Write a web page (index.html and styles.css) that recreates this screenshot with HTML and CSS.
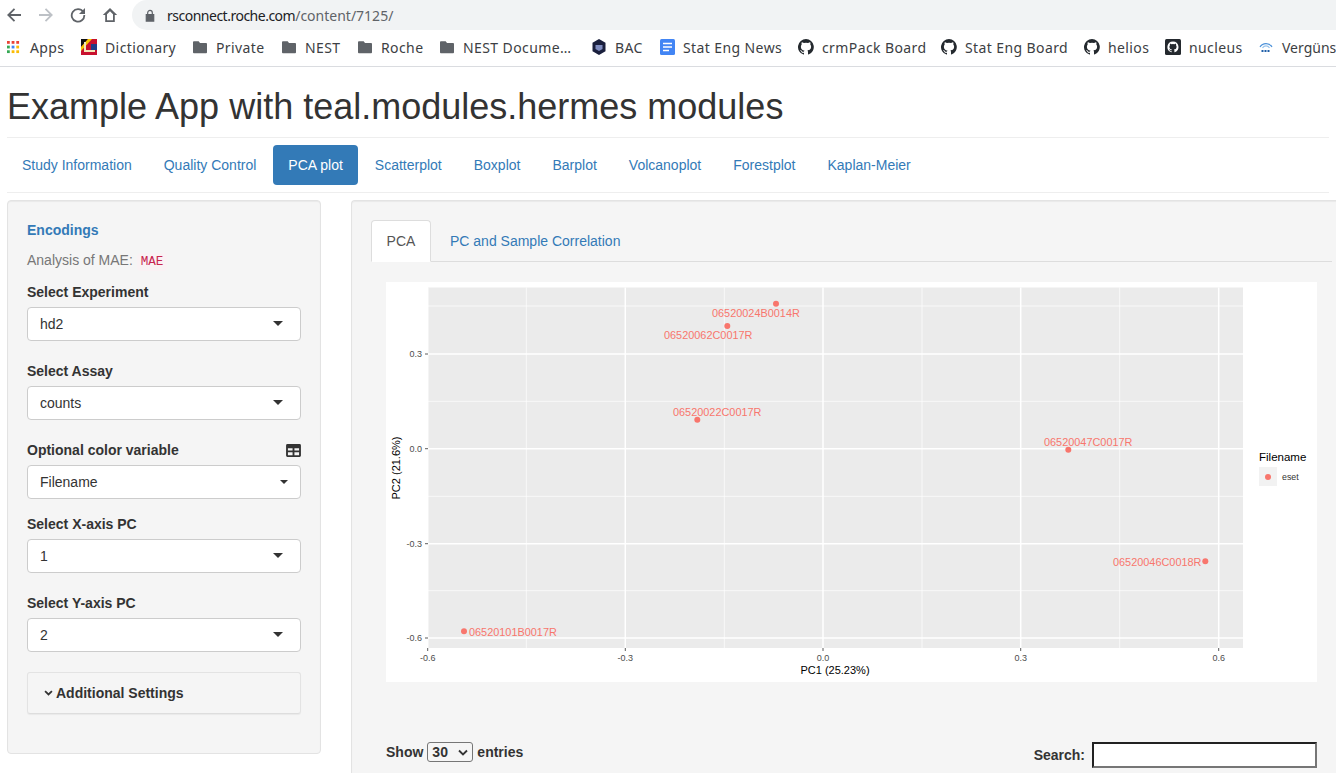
FILE: index.html
```html
<!DOCTYPE html>
<html lang="en">
<head>
<meta charset="utf-8">
<title>Example App</title>
<link rel="stylesheet" href="styles.css">
</head>
<body>
<svg class="defs" aria-hidden="true">
  <symbol id="folder" viewBox="0 0 16 16"><path d="M1 1.500h5.500L8 3.500h7a1 1 0 0 1 1 1V14a1 1 0 0 1-1 1H1a1 1 0 0 1-1-1V2.500a1 1 0 0 1 1-1z" fill="#5f6368"/></symbol>
  <symbol id="gh" viewBox="0 0 16 16"><path fill="#24292e" d="M8 0a8 8 0 0 0-2.500 15.600c.4.1.5-.2.5-.4v-1.400c-2.200.5-2.700-1-2.700-1-.4-.9-.9-1.200-.9-1.200-.7-.5.1-.5.1-.5.8.1 1.200.8 1.200.8.7 1.200 1.900.9 2.300.7.1-.5.3-.9.5-1.100-1.800-.2-3.600-.9-3.600-4 0-.9.3-1.600.8-2.100-.1-.2-.4-1 .1-2.100 0 0 .7-.2 2.200.8a7.500 7.500 0 0 1 4 0c1.500-1 2.200-.8 2.200-.8.4 1.100.2 1.900.1 2.100.5.6.8 1.300.8 2.100 0 3.100-1.900 3.700-3.700 3.900.3.3.6.8.6 1.500v2.200c0 .2.1.5.6.4A8 8 0 0 0 8 0z"/></symbol>
</svg>
<header class="chrome">
  <div class="toolbar">
    <div class="navbtns">
      <svg class="navicon" viewBox="0 0 16 16"><path d="M15 8H2.500M8.500 1.800 2.300 8l6.200 6.200" fill="none" stroke="#5f6368" stroke-width="1.800"/></svg>
      <svg class="navicon" viewBox="0 0 16 16"><path d="M1 8h12.500M7.500 1.800 13.700 8l-6.200 6.200" fill="none" stroke="#bdc1c6" stroke-width="1.800"/></svg>
      <svg class="navicon" viewBox="0 0 16 16"><path d="M13.200 4.800A6.300 6.300 0 1 0 14.300 8" fill="none" stroke="#5f6368" stroke-width="1.800"/><path d="M15 1v6H9z" fill="#5f6368"/></svg>
      <svg class="navicon" viewBox="0 0 16 16"><path d="M8 1 .8 8h2.400v7h9.600V8h2.400zM5 13.300V7.200l3-3 3 3v6.100z" fill="#5f6368"/></svg>
    </div>
    <div class="omnibox">
      <svg class="lock" viewBox="0 0 10 14"><path d="M2.500 6V4a2.500 2.500 0 0 1 5 0v2M1 6h8v7H1z" fill="none" stroke="#5f6368" stroke-width="1.300"/><path d="M1 6h8v7H1z" fill="#5f6368"/></svg>
      <span class="url">rsconnect.roche.com<span class="urlpath">/content/7125/</span></span>
    </div>
  </div>
  <nav class="bookmarks">
    <span class="bm bm-apps"><svg class="bmi" viewBox="0 0 14 14"><rect x="0" y="0" width="3" height="3" fill="#ea4335"/><rect x="5" y="0" width="3" height="3" fill="#ea4335"/><rect x="10" y="0" width="3" height="3" fill="#ea4335"/><rect x="0" y="5" width="3" height="3" fill="#34a853"/><rect x="5" y="5" width="3" height="3" fill="#4285f4"/><rect x="10" y="5" width="3" height="3" fill="#fbbc05"/><rect x="0" y="10" width="3" height="3" fill="#34a853"/><rect x="5" y="10" width="3" height="3" fill="#fbbc05"/><rect x="10" y="10" width="3" height="3" fill="#fbbc05"/></svg>Apps</span>
    <span class="bm bm-dict"><svg class="bmi bmi-l" viewBox="0 0 16 16"><rect width="16" height="16" fill="#c8102e"/><path d="M0 0h7L0 8z" fill="#111"/><path d="M0 8 7 0h4L0 12z" fill="#f6c700"/><path d="M10 5h6v6h-6z" fill="#1f3c88"/><path d="M3 3h2v8h9v2H3z" fill="#f3e6b8"/></svg>Dictionary</span>
    <span class="bm bm-priv"><svg class="bmi bmi-f" viewBox="0 0 16 16"><use href="#folder"/></svg>Private</span>
    <span class="bm bm-nest"><svg class="bmi bmi-f" viewBox="0 0 16 16"><use href="#folder"/></svg>NEST</span>
    <span class="bm bm-roche"><svg class="bmi bmi-f" viewBox="0 0 16 16"><use href="#folder"/></svg>Roche</span>
    <span class="bm bm-docs"><svg class="bmi bmi-f" viewBox="0 0 16 16"><use href="#folder"/></svg>NEST Docume…</span>
    <span class="bm bm-bac"><svg class="bmi bmi-l" viewBox="0 0 16 16"><path d="M8 0 14.500 3.800v8.400L8 16 1.500 12.200V3.800z" fill="#1a1f3d"/><path d="M4.500 6h7v4l-3.500 2-3.500-2z" fill="#7f8cc0"/></svg>BAC</span>
    <span class="bm bm-news"><svg class="bmi bmi-l" viewBox="0 0 16 16"><rect x="1" width="15" height="16" rx="1.500" fill="#4285f4"/><path d="M4 4.500h9M4 8h9M4 11.500h6" stroke="#fff" stroke-width="1.600"/></svg>Stat Eng News</span>
    <span class="bm bm-crm"><svg class="bmi bmi-l" viewBox="0 0 16 16"><use href="#gh"/></svg>crmPack Board</span>
    <span class="bm bm-seb"><svg class="bmi bmi-l" viewBox="0 0 16 16"><use href="#gh"/></svg>Stat Eng Board</span>
    <span class="bm bm-hel"><svg class="bmi bmi-l" viewBox="0 0 16 16"><use href="#gh"/></svg>helios</span>
    <span class="bm bm-nuc"><svg class="bmi bmi-l" viewBox="0 0 16 16"><rect width="16" height="16" rx="1.500" fill="#24292e"/><g transform="translate(2.400 2.400) scale(.7)"><path fill="#fff" d="M8 0a8 8 0 0 0-2.500 15.600c.4.1.5-.2.5-.4v-1.400c-2.200.5-2.700-1-2.700-1-.4-.9-.9-1.200-.9-1.200-.7-.5.1-.5.1-.5.8.1 1.200.8 1.200.8.7 1.200 1.900.9 2.300.7.1-.5.3-.9.5-1.100-1.800-.2-3.600-.9-3.600-4 0-.9.3-1.600.8-2.100-.1-.2-.4-1 .1-2.100 0 0 .7-.2 2.200.8a7.500 7.500 0 0 1 4 0c1.500-1 2.200-.8 2.200-.8.4 1.100.2 1.900.1 2.100.5.6.8 1.300.8 2.100 0 3.100-1.900 3.700-3.700 3.900.3.3.6.8.6 1.500v2.200c0 .2.1.5.6.4A8 8 0 0 0 8 0z"/></g></svg>nucleus</span>
    <span class="bm bm-verg"><svg class="bmi bmi-l" viewBox="0 0 16 16"><path d="M2 8a7 7 0 0 1 12 0" fill="none" stroke="#4a90d9" stroke-width="1.200"/><path d="M4.500 9a4 4 0 0 1 7 0" fill="none" stroke="#9cc4ea" stroke-width="1.200"/><path d="M3.500 12h9" stroke="#1f5fa8" stroke-width="2" stroke-dasharray="2 1"/></svg>Vergüns</span>
  </nav>
</header>

<main class="app">
  <h1 class="title">Example App with teal.modules.hermes modules</h1>
  <ul class="tabs-pill">
    <li><a>Study Information</a></li>
    <li><a>Quality Control</a></li>
    <li class="active"><a>PCA plot</a></li>
    <li><a>Scatterplot</a></li>
    <li><a>Boxplot</a></li>
    <li><a>Barplot</a></li>
    <li><a>Volcanoplot</a></li>
    <li><a>Forestplot</a></li>
    <li><a>Kaplan-Meier</a></li>
  </ul>
  <div class="content">
    <aside class="well sidebar">
      <div class="enc">Encodings</div>
      <div class="mae">Analysis of MAE: <code>MAE</code></div>
      <div class="field"><label>Select Experiment</label><div class="sel">hd2<i class="caret"></i></div></div>
      <div class="field"><label>Select Assay</label><div class="sel">counts<i class="caret"></i></div></div>
      <div class="field field-tight"><label class="labelrow">Optional color variable
        <svg class="tbl" viewBox="0 0 16 14"><path fill="#333" fill-rule="evenodd" d="M1.500 0h13A1.500 1.500 0 0 1 16 1.500v11a1.500 1.500 0 0 1-1.500 1.500h-13A1.500 1.500 0 0 1 0 12.500v-11A1.500 1.500 0 0 1 1.500 0zM2 4.500V7h5V4.500zM9 4.500V7h5V4.500zM2 9v3h5V9zM9 9v3h5V9z"/></svg></label>
        <div class="sel">Filename<i class="caret caret-sm"></i></div></div>
      <div class="field"><label>Select X-axis PC</label><div class="sel">1<i class="caret"></i></div></div>
      <div class="field"><label>Select Y-axis PC</label><div class="sel">2<i class="caret"></i></div></div>
      <div class="collapse"><svg class="chev" viewBox="0 0 10 7"><path d="M1 1.200 5 5.200 9 1.200" fill="none" stroke="#333" stroke-width="2"/></svg>Additional Settings</div>
    </aside>
    <section class="well mainpanel">
      <ul class="tabs-line">
        <li class="active">PCA</li>
        <li>PC and Sample Correlation</li>
      </ul>
      <svg class="plot" viewBox="0 0 931 400" role="img">
        <rect class="plot-panel" x="42" y="5.500" width="815" height="360.500"/>
        <g class="gmin">
          <path d="M140.300 5.500V366M338.300 5.500V366M536 5.500V366M733.700 5.500V366M42 24H857M42 119.300H857M42 214.300H857M42 308.700H857"/>
        </g>
        <g class="gmaj">
          <path d="M41.700 5.500V366M239.300 5.500V366M437 5.500V366M634.700 5.500V366M832.700 5.500V366M42 72H857M42 166.700H857M42 261.700H857M42 356H857"/>
        </g>
        <g class="ticks">
          <path d="M39 72h3M39 166.700h3M39 261.700h3M39 356h3M41.700 366v3M239.300 366v3M437 366v3M634.700 366v3M832.700 366v3"/>
        </g>
        <g class="ticklab-y">
          <text x="36" y="75">0.3</text><text x="36" y="169.700">0.0</text><text x="36" y="264.700">-0.3</text><text x="36" y="359">-0.6</text>
        </g>
        <g class="ticklab-x">
          <text x="41.700" y="379">-0.6</text><text x="239.300" y="379">-0.3</text><text x="437" y="379">0.0</text><text x="634.700" y="379">0.3</text><text x="832.700" y="379">0.6</text>
        </g>
        <g class="pts">
          <circle cx="390" cy="21.700" r="3"/><circle cx="341.300" cy="44" r="3"/><circle cx="311.300" cy="137.700" r="3"/><circle cx="682.300" cy="167.700" r="3"/><circle cx="819.300" cy="279.300" r="3"/><circle cx="78" cy="349.300" r="3"/>
        </g>
        <g class="plabs">
          <text x="326" y="35">06520024B0014R</text>
          <text x="278" y="57">06520062C0017R</text>
          <text x="287" y="134">06520022C0017R</text>
          <text x="658" y="164">06520047C0017R</text>
          <text x="727" y="284">06520046C0018R</text>
          <text x="83" y="354">06520101B0017R</text>
        </g>
        <text class="axt" x="449" y="392" text-anchor="middle">PC1 (25.23%)</text>
        <text class="axt" transform="translate(13.500 186) rotate(-90)" text-anchor="middle">PC2 (21.6%)</text>
        <text class="axt legt" x="873" y="179">Filename</text>
        <rect class="key" x="873" y="185" width="18" height="19"/>
        <circle class="keypt" cx="882" cy="195" r="3"/>
        <text class="keyt" x="896" y="198">eset</text>
      </svg>
      <div class="dtbar">
        <div class="show">Show <span class="lensel">30<svg class="lenchev" viewBox="0 0 10 7"><path d="M1 1.500 5 5.500 9 1.500" fill="none" stroke="#333" stroke-width="1.800"/></svg></span> entries</div>
        <div class="search">Search: <span class="searchbox"></span></div>
      </div>
    </section>
  </div>
</main>
</body>
</html>
```

FILE: styles.css
```css
* { box-sizing: border-box; }
html, body { margin: 0; height: 773px; overflow: hidden; background: #fff; }
body { font-family: "Liberation Sans", Arial, sans-serif; font-size: 14px; color: #333; }

.defs { display: none; }
.chrome { height: 67px; border-bottom: 1px solid #dadce0; font-family: "Noto Sans", "Open Sans", sans-serif; }
.toolbar { height: 30px; display: flex; align-items: center; }
.navbtns { width: 132px; flex: none; display: flex; gap: 16px; padding-left: 6px; }
.navicon { width: 16px; height: 16px; flex: none; }
.omnibox { flex: 1; height: 30px; background: #f1f3f4; border-radius: 15px 0 0 15px; display: flex; align-items: center; padding-left: 13px; gap: 12px; }
.lock { width: 10px; height: 13px; flex: none; }
.url { font-size: 14px; color: #202124; letter-spacing: -.5px; }
.urlpath { color: #5f6368; letter-spacing: 0; }

.bookmarks { height: 36px; display: flex; align-items: center; white-space: nowrap; overflow: hidden; font-size: 14px; letter-spacing: .4px; color: #3c4043; padding: 0 0 2px 7px; }
.bm { display: inline-flex; align-items: center; flex: none; }
.bmi { width: 13px; height: 13px; margin-right: 10px; flex: none; }
.bmi-l { width: 16px; height: 16px; margin-right: 8px; }
.bmi-f { width: 14px; height: 14px; margin-right: 9px; }
.bm-apps { width: 74px; }
.bm-dict { width: 112px; }
.bm-priv { width: 89px; }
.bm-nest { width: 76px; }
.bm-roche { width: 82px; }
.bm-docs { width: 151px; }
.bm-bac { width: 68px; }
.bm-news { width: 139px; }
.bm-crm { width: 143px; }
.bm-seb { width: 143px; }
.bm-hel { width: 81px; }
.bm-nuc { width: 93px; }
.bm-verg { letter-spacing: 0; }

.app { padding: 0 7px; }
.title { font-size: 36px; font-weight: 400; line-height: 40px; margin: 0; padding: 20px 0 10px; height: 71px; border-bottom: 1px solid #eee; color: #333; }
.tabs-pill { list-style: none; margin: 0; padding: 7px 0; display: flex; gap: 2px; border-bottom: 1px solid #eee; height: 55px; }
.tabs-pill li { border-radius: 4px; }
.tabs-pill a { display: block; padding: 10px 15px; line-height: 20px; height: 40px; color: #337ab7; }
.tabs-pill li.active { background: #337ab7; }
.tabs-pill li.active a { color: #fff; }

.content { display: flex; gap: 30px; align-items: flex-start; margin-top: 7px; }
.well { background: #f5f5f5; border: 1px solid #e3e3e3; border-radius: 4px; box-shadow: inset 0 1px 1px rgba(0,0,0,.05); }
.sidebar { width: 314px; flex: none; height: 554px; padding: 19px; }
.enc { font-weight: 700; color: #337ab7; line-height: 20px; margin-bottom: 10px; }
.mae { color: #777; line-height: 20px; margin-bottom: 10px; }
code { font-family: "Liberation Mono", monospace; font-size: 12.600px; color: #c7254e; background: #f9f2f4; padding: 2px 4px; border-radius: 4px; }
.field { margin-bottom: 15px; height: 64px; }
.field-tight { margin-bottom: 7px; height: 67px; }
.field label { display: block; font-weight: 700; line-height: 20px; margin-bottom: 5px; }
.field .labelrow { display: flex; justify-content: space-between; align-items: center; }
.tbl { width: 15px; height: 13px; }
.sel { position: relative; height: 34px; background: #fff; border: 1px solid #ccc; border-radius: 4px; padding: 0 12px; line-height: 32px; color: #333; }
.caret { position: absolute; right: 17px; top: 13px; border-top: 5px solid #333; border-left: 5px solid transparent; border-right: 5px solid transparent; }
.caret-sm { right: 12px; top: 14px; border-top-width: 4px; border-left-width: 4px; border-right-width: 4px; }
.collapse { margin-top: 15px; height: 42px; border: 1px solid #e3e3e3; border-bottom-color: #ddd; border-radius: 3px; box-shadow: 0 1px 1px rgba(0,0,0,.05); display: flex; align-items: center; padding-left: 16px; font-weight: 700; }
.chev { width: 9px; height: 6px; margin-right: 3px; }

.mainpanel { flex: none; width: 1000px; height: 600px; padding: 19px 0 0 19px; overflow: hidden; border-right: 0; border-bottom: 0; }
.tabs-line { list-style: none; margin: 0; padding: 0; width: 961px; height: 42px; display: flex; gap: 2px; border-bottom: 1px solid #ddd; }
.tabs-line li { height: 42px; padding: 10px 15px 0 16px; line-height: 20px; color: #337ab7; border: 1px solid transparent; border-radius: 4px 4px 0 0; }
.tabs-line li.active { width: 60px; padding: 10px 0 0; text-align: center; background: #fff; border-color: #ddd; border-bottom-color: #fff; color: #555; }
.plot { display: block; width: 931px; height: 400px; margin: 20px 0 0 15px; background: #fff; }
.plot-panel { fill: #ebebeb; }
.gmin path { stroke: #fff; stroke-width: .7; fill: none; }
.gmaj path { stroke: #fff; stroke-width: 1.500; fill: none; }
.ticks path { stroke: #333; stroke-width: .8; fill: none; }
.ticklab-y text { font-size: 9px; fill: #4d4d4d; text-anchor: end; }
.ticklab-x text { font-size: 9px; fill: #4d4d4d; text-anchor: middle; }
.pts circle { fill: #f8766d; }
.plabs text { font-size: 10.900px; fill: #f8766d; }
.axt { font-size: 11px; fill: #000; }
.legt { font-size: 11.500px; }
.key { fill: #f2f2f2; }
.keypt { fill: #f8766d; }
.keyt { font-size: 8.800px; fill: #333; }
.dtbar { width: 931px; margin: 60px 0 0 15px; display: flex; justify-content: space-between; font-weight: 700; }
.show { display: flex; align-items: center; gap: 4px; height: 20px; }
.lensel { position: relative; display: block; width: 46px; height: 20px; border: 1px solid #767676; border-radius: 3px; padding-left: 4px; line-height: 18px; }
.lenchev { position: absolute; right: 4px; top: 6px; width: 10px; height: 7px; }
.search { display: flex; align-items: center; gap: 7px; }
.searchbox { width: 225px; height: 26px; background: #fff; border: 2px solid; border-color: #222 #767676 #767676 #222; }
```
